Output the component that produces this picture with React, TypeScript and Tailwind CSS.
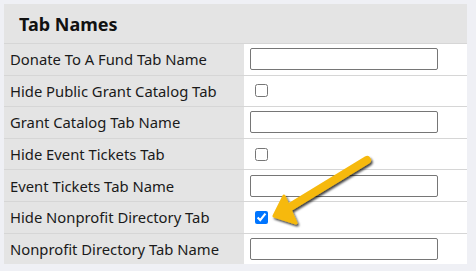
import React from 'react';

type Row = { label: string; kind: 'text' | 'check'; checked?: boolean };

const rows: Row[] = [
  { label: 'Donate To A Fund Tab Name', kind: 'text' },
  { label: 'Hide Public Grant Catalog Tab', kind: 'check' },
  { label: 'Grant Catalog Tab Name', kind: 'text' },
  { label: 'Hide Event Tickets Tab', kind: 'check' },
  { label: 'Event Tickets Tab Name', kind: 'text' },
  { label: 'Hide Nonprofit Directory Tab', kind: 'check', checked: true },
  { label: 'Nonprofit Directory Tab Name', kind: 'text' },
];

export default function App() {
  return (
    <div
      className="relative w-[476px] h-[271px] bg-[#eff0f5] p-[4px] text-[#1a1a1a]"
      style={{ fontFamily: '"Noto Sans", "Open Sans", sans-serif' }}
    >
      <div className="w-[463px] bg-[#e4e4e4]">
        {/* header */}
        <div className="h-[39px] flex items-center pl-[15px] pt-[1px]">
          <h2 className="text-[18px] font-bold text-[#111]">Tab Names</h2>
        </div>

        {rows.map((r) => (
          <div key={r.label} className="flex h-[31.6px] border-t border-[#d6d6d6]">
            <div className="w-[240px] flex items-center pl-[6px] text-[14.8px]">{r.label}</div>
            <div className="flex-1 bg-white flex items-center">
              {r.kind === 'text' ? (
                <input
                  type="text"
                  className="ml-[6px] w-[188px] h-[22px] border border-[#767676] rounded-[2px] bg-white"
                />
              ) : (
                <input
                  type="checkbox"
                  defaultChecked={r.checked}
                  className="m-0 ml-[11px] w-[13px] h-[13px]"
                />
              )}
            </div>
          </div>
        ))}
      </div>

      {/* annotation arrow */}
      <svg
        className="absolute left-0 top-0 pointer-events-none"
        width="476"
        height="271"
        viewBox="0 0 476 271"
      >
        <defs>
          <filter id="sh" x="-20%" y="-20%" width="140%" height="140%">
            <feDropShadow dx="1.5" dy="2" stdDeviation="1.3" floodColor="#000" floodOpacity="0.75" />
          </filter>
        </defs>
        <g filter="url(#sh)" fill="#f6b90b" stroke="#f6b90b">
          <line x1="367" y1="160" x2="290" y2="207" strokeWidth="8" strokeLinecap="round" />
          <polygon points="274,216 284,196 296,223" strokeWidth="3" strokeLinejoin="round" />
        </g>
      </svg>
    </div>
  );
}
